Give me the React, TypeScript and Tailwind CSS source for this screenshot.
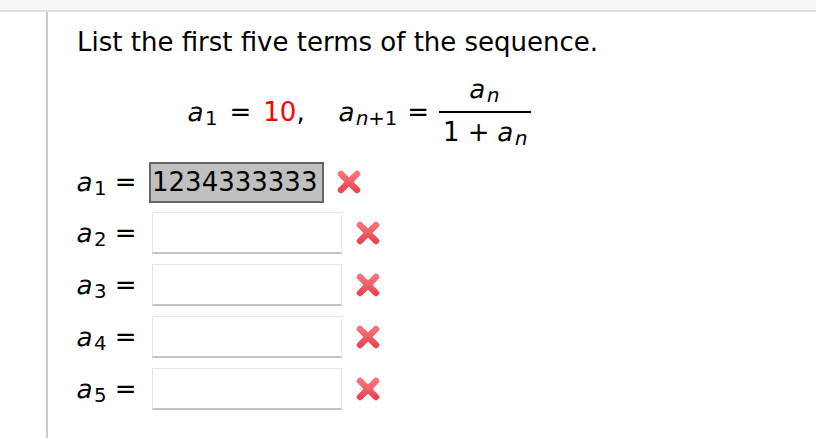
import React from 'react'

const font = { fontFamily: '"DejaVu Sans", Verdana, sans-serif' }

function XMark({ className = '' }: { className?: string }) {
  return (
    <svg viewBox="0 0 26 26" className={`w-[26px] h-[26px] ${className}`}>
      <defs>
        <linearGradient id="xg" x1="0" y1="0" x2="0" y2="1">
          <stop offset="0" stopColor="#f7737b" />
          <stop offset="1" stopColor="#ea4753" />
        </linearGradient>
      </defs>
      <g stroke="url(#xg)" strokeWidth="6.5" strokeLinecap="round">
        <line x1="5" y1="5" x2="21" y2="21" />
        <line x1="21" y1="5" x2="5" y2="21" />
      </g>
    </svg>
  )
}

// italic "a" with a subscript; n in the subscript is italic too
function Term({ sub }: { sub: string }) {
  const parts = sub.split(/(n)/).filter(Boolean)
  return (
    <span className="whitespace-nowrap">
      <span className="inline-block -skew-x-12">a</span>
      <span className="text-[0.76em] relative top-[0.22em] ml-[1px]">
        {parts.map((p, i) =>
          p === 'n' ? (
            <span key={i} className="inline-block -skew-x-12">n</span>
          ) : (
            <span key={i}>{p}</span>
          ),
        )}
      </span>
    </span>
  )
}

const rows = ['2', '3', '4', '5']

export default function App() {
  return (
    <div className="w-[816px] h-[438px] bg-white overflow-hidden text-black" style={font}>
      <div className="h-[12px] bg-[#f5f5f5] border-b-2 border-[#dddddd]" />
      <div className="ml-[46px] h-[426px] border-l-2 border-[#cccccc] pl-[29px] pt-[14px] text-[26px]">
        <h1 className="leading-[32px]">List the first five terms of the sequence.</h1>

        <div className="flex items-center ml-[111px] mt-[19px] h-[70px]">
          <Term sub="1" />
          <span className="mx-[12px]">=</span>
          <span className="text-[#ff0000]">10</span>
          <span>,</span>
          <span className="w-[34px]" />
          <Term sub="n+1" />
          <span className="mx-[10px]">=</span>
          <div className="flex flex-col items-center">
            <span className="px-[4px] leading-[30px] pb-[4px]"><Term sub="n" /></span>
            <span className="w-full h-[2px] bg-black" />
            <span className="px-[4px] leading-[30px] pt-[4px]">1 + <Term sub="n" /></span>
          </div>
        </div>

        <div className="flex items-center mt-[14px] h-[42px]">
          <span className="w-[72px]"><Term sub="1" /> =</span>
          <div className="h-[41px] w-[175px] bg-[#c0c0c0] border-2 border-[#666666] flex items-center px-[1px] leading-none">
            1234333333
          </div>
          <XMark className="ml-[12px]" />
        </div>

        <div className="flex flex-col gap-[10px] mt-[9px]">
          {rows.map((r) => (
            <div key={r} className="flex items-center h-[42px]">
              <span className="w-[75px]"><Term sub={r} /> =</span>
              <div className="h-[42px] w-[190px] bg-white border border-[#e6e6e6] border-b-2 border-b-[#c4c4c4]" />
              <XMark className="ml-[13px]" />
            </div>
          ))}
        </div>
      </div>
    </div>
  )
}
